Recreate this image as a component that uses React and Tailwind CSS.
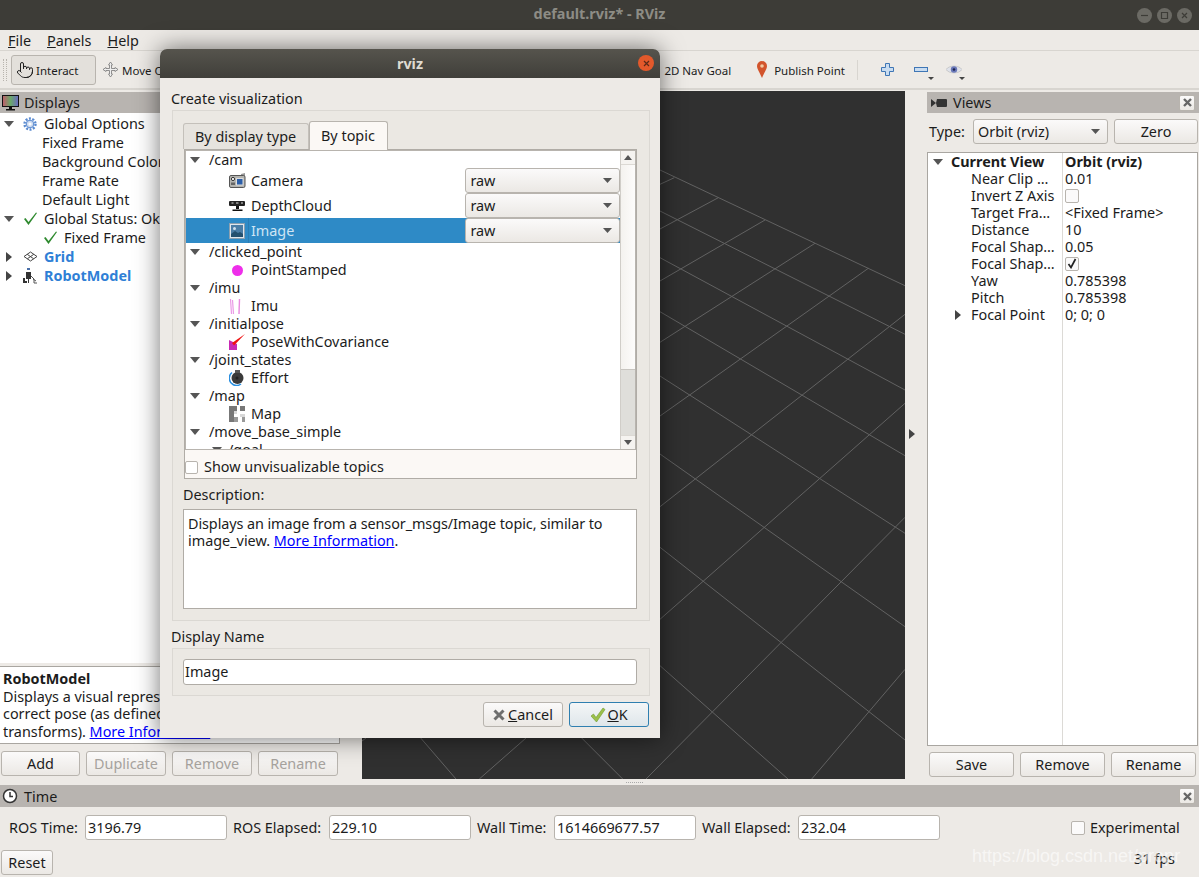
import { Pointer } from "lucide-react";

const GRID_LINES = [
  [660, 170, 905, 285.7], [660, 211, 905, 334.3], [660, 257.7, 905, 390], [660, 311.7, 905, 455.7],
  [660, 376, 905, 533.3], [660, 454, 905, 626.7], [660, 547.3, 905, 740], [660, 665.7, 788, 779],
  [420.7, 738, 456, 779], [581.7, 738, 622.7, 779],
  [660, 184.3, 674.3, 177.7], [660, 229, 718.3, 197.7], [660, 281, 765, 220], [660, 342.3, 815, 243.3],
  [660, 416, 868.3, 268.3], [660, 506.7, 905, 314.3], [660, 619.3, 905, 403.3], [646, 779, 905, 517.3],
  [811.7, 779, 905, 669.3], [479.3, 779, 526, 738], [362, 741, 366, 738],
];

const btnClass =
  "flex items-center justify-center rounded-[3px] border border-[#b8b4ae] bg-linear-to-b from-[#fbfafa] to-[#ebe8e4]";

function CaretDown({ className = "" }) {
  return (
    <svg width="10" height="6" viewBox="0 0 10 6" className={`shrink-0 ${className}`}>
      <path d="M0 0h10L5 6z" fill="#555" />
    </svg>
  );
}

function CaretRight({ className = "" }) {
  return (
    <svg width="6" height="10" viewBox="0 0 6 10" className={`shrink-0 ${className}`}>
      <path d="M0 0v10l6-5z" fill="#444" />
    </svg>
  );
}

function Check({ size = 15 }) {
  return (
    <svg width={size} height={size} viewBox="0 0 15 15" className="shrink-0">
      <path d="M1 8l1.500-1 3 4L13 1.500l1 .5L5.500 14z" fill="#2f8a2f" />
    </svg>
  );
}

function CloseBox() {
  return (
    <div className={`${btnClass} h-[16px] w-[16px] !rounded-[2px]`}>
      <svg width="9" height="9" viewBox="0 0 9 9">
        <path d="M1 1l7 7M8 1L1 8" stroke="#666" strokeWidth="2.400" />
      </svg>
    </div>
  );
}

function Btn({ children, className = "", disabled }) {
  return <div className={`${btnClass} ${disabled ? "text-[#a6a29d]" : ""} ${className}`}>{children}</div>;
}

function Combo({ label, className = "" }) {
  return (
    <div className={`${btnClass} !justify-between pl-[4px] pr-[7px] ${className}`}>
      <span>{label}</span>
      <svg width="9" height="5" viewBox="0 0 9 5">
        <path d="M0 0h9L4.500 5z" fill="#555" />
      </svg>
    </div>
  );
}

function DisplaysIcon() {
  return (
    <svg width="17" height="16" viewBox="0 0 17 16" className="shrink-0">
      <defs>
        <linearGradient id="scr" x1="0" x2="1" y1="0" y2="0">
          <stop offset="0" stopColor="#c25a6a" />
          <stop offset="0.5" stopColor="#6aa86a" />
          <stop offset="1" stopColor="#6a6ac2" />
        </linearGradient>
      </defs>
      <rect x="0.500" y="0.500" width="16" height="11" fill="url(#scr)" stroke="#111" />
      <path d="M7 12h3v2H7zM4 14h9v1.500H4z" fill="#111" />
    </svg>
  );
}

function GearIcon() {
  return (
    <svg width="14" height="14" viewBox="0 0 14 14" className="shrink-0">
      <circle cx="7" cy="7" r="5.500" fill="none" stroke="#5b8bd0" strokeWidth="2.400" strokeDasharray="2 1.450" />
      <circle cx="7" cy="7" r="3.800" fill="#cfdcf0" stroke="#5b8bd0" />
      <circle cx="7" cy="7" r="1.600" fill="#fff" />
    </svg>
  );
}

function GridIcon() {
  return (
    <svg width="15" height="11" viewBox="0 0 15 11" className="shrink-0">
      <path d="M7.500 1L14 5.500 7.500 10 1 5.500zM4.200 3.300l6.500 4.500M10.800 3.300L4.300 7.800" fill="none" stroke="#444" />
    </svg>
  );
}

function RobotIcon() {
  return (
    <svg width="16" height="16" viewBox="0 0 16 16" className="shrink-0">
      <path d="M5 0h3v2H5z" fill="#4a6fa8" />
      <path d="M4 4h5v7H4zM1 10h2v5H1zM3 13h2v2H3zM6 11h1v4H6z" fill="#333" />
      <path d="M9 8l3 3v4M12 15h3M11 11l3 2" fill="none" stroke="#555" />
    </svg>
  );
}

function CameraIcon() {
  return (
    <svg width="17" height="16" viewBox="0 0 17 16" className="shrink-0">
      <path d="M12 1l4-1v3h-4z" fill="#999" />
      <rect x="0.500" y="2.500" width="15.500" height="12" rx="1.500" fill="#b4b4b0" stroke="#555" />
      <circle cx="4" cy="6" r="1.600" fill="#fff" stroke="#333" />
      <rect x="2" y="9.500" width="4" height="2.500" fill="#666" />
      <rect x="7.500" y="5.500" width="6.500" height="6.500" fill="#2b5ea8" stroke="#ddd" />
    </svg>
  );
}

function DepthIcon() {
  return (
    <svg width="17" height="12" viewBox="0 0 17 12" className="shrink-0">
      <rect x="0" y="1" width="16" height="5" rx="1" fill="#222" />
      <path d="M2.500 3h2M7 3h2.500M12 3h2" stroke="#ddd" />
      <path d="M7 6h3v3H7zM3.500 9.500h10v1.500h-10z" fill="#111" />
    </svg>
  );
}

function ImageIcon() {
  return (
    <svg width="16" height="16" viewBox="0 0 16 16" className="shrink-0">
      <rect x="0.500" y="0.500" width="15" height="15" fill="#dfe6ec" stroke="#8ca0b0" />
      <rect x="2" y="2" width="12" height="12" fill="#4a7da6" />
      <circle cx="5.500" cy="5.500" r="1.500" fill="#cfe0ee" />
      <path d="M2 14v-3l4-3 3 2 2-1 3 2v3z" fill="#23506f" />
    </svg>
  );
}

function PoseIcon() {
  return (
    <svg width="17" height="16" viewBox="0 0 17 16" className="shrink-0">
      <path d="M0 6l8 4v6H0z" fill="#c828b4" />
      <path d="M16 0L3 9l2 2.500z" fill="#ee1111" />
    </svg>
  );
}

function ImuIcon() {
  return (
    <svg width="12" height="15" viewBox="0 0 12 15" className="shrink-0">
      <path d="M1.500 0l1 15M3.500 1l1 14" stroke="#ea9ae6" strokeWidth="1.200" />
      <path d="M10.500 0L10 15" stroke="#e88ae0" strokeWidth="1.400" />
    </svg>
  );
}

function EffortIcon() {
  return (
    <svg width="16" height="16" viewBox="0 0 16 16" className="shrink-0">
      <circle cx="8.500" cy="8" r="6" fill="#3a3a3a" />
      <path d="M6 0h5v3H6z" fill="#555" />
      <path d="M3 2.500A7.300 7.300 0 0 0 4 14.500a7.300 7.300 0 0 0 8-.5" fill="none" stroke="#2a8fe0" strokeWidth="1.500" />
      <circle cx="8" cy="8" r="1.500" fill="#222" />
    </svg>
  );
}

function MapIcon() {
  return (
    <svg width="16" height="16" viewBox="0 0 16 16" className="shrink-0">
      <path d="M0 0h8v5H5v11H0zM11 0h5v5h-5z" fill="#777" />
      <path d="M5 5h3v3H5zM11 8h5v3h-5z" fill="#d8d8d8" />
      <path d="M5 11h4v5H5zM13 11h3v5h-3z" fill="#999" />
    </svg>
  );
}

function LeftRow({ indent, children }) {
  return <div className={`flex h-[19px] items-center whitespace-nowrap ${indent}`}>{children}</div>;
}

function DisplaysPanel() {
  return (
    <div className="flex w-[340px] flex-col pt-[2px]">
      <div className="flex h-[21px] items-center gap-[5px] bg-[#b8b4b0] pl-[2px]">
        <DisplaysIcon />
        <span>Displays</span>
      </div>
      <div className="h-[550px] overflow-hidden bg-white pt-px">
        <LeftRow indent="pl-[4px]">
          <CaretDown />
          <span className="ml-[9px]"><GearIcon /></span>
          <span className="ml-[7px]">Global Options</span>
        </LeftRow>
        <LeftRow indent="pl-[42px]">Fixed Frame</LeftRow>
        <LeftRow indent="pl-[42px]">Background Color</LeftRow>
        <LeftRow indent="pl-[42px]">Frame Rate</LeftRow>
        <LeftRow indent="pl-[42px]">Default Light</LeftRow>
        <LeftRow indent="pl-[4px]">
          <CaretDown />
          <span className="ml-[9px]"><Check /></span>
          <span className="ml-[6px]">Global Status: Ok</span>
        </LeftRow>
        <LeftRow indent="pl-[43px]">
          <Check />
          <span className="ml-[6px]">Fixed Frame</span>
        </LeftRow>
        <LeftRow indent="pl-[6px]">
          <CaretRight />
          <span className="ml-[11px]"><GridIcon /></span>
          <span className="ml-[6px] font-bold text-[#2f7fd6]">Grid</span>
        </LeftRow>
        <LeftRow indent="pl-[6px]">
          <CaretRight />
          <span className="ml-[10px]"><RobotIcon /></span>
          <span className="ml-[6px] font-bold text-[#2f7fd6]">RobotModel</span>
        </LeftRow>
      </div>
      <div className="mt-[3px] h-[78px] overflow-hidden border border-[#a9a6a1] border-l-0 bg-white pl-[3px] pt-[3px] leading-[17.500px] whitespace-nowrap">
        <div className="font-bold">RobotModel</div>
        <div>Displays a visual representation of a robot in the</div>
        <div>correct pose (as defined by the current TF</div>
        <div>
          transforms). <span className="text-[#0000ff] underline">More Information</span>.
        </div>
      </div>
      <div className="mt-[7px] flex gap-[6px] pl-px">
        <Btn className="h-[25px] w-[79px]">Add</Btn>
        <Btn className="h-[25px] w-[80px]" disabled>Duplicate</Btn>
        <Btn className="h-[25px] w-[80px]" disabled>Remove</Btn>
        <Btn className="h-[25px] w-[80px]" disabled>Rename</Btn>
      </div>
    </div>
  );
}

function ViewsPanel() {
  const rows = [
    ["Near Clip …", "0.01"],
    ["Invert Z Axis", "box"],
    ["Target Fra…", "<Fixed Frame>"],
    ["Distance", "10"],
    ["Focal Shap…", "0.05"],
    ["Focal Shap…", "checked"],
    ["Yaw", "0.785398"],
    ["Pitch", "0.785398"],
  ];
  return (
    <div className="flex w-[272px] flex-col pt-[2px]">
      <div className="flex h-[21px] items-center justify-between bg-[#b8b4b0] pl-[4px] pr-[4px]">
        <div className="flex items-center gap-[6px]">
          <svg width="16" height="10" viewBox="0 0 16 10">
            <path d="M0 1l5 4-5 4zM6 1h9a1 1 0 0 1 1 1v6a1 1 0 0 1-1 1H6l-1-4z" fill="#333" />
          </svg>
          <span>Views</span>
        </div>
        <CloseBox />
      </div>
      <div className="mt-[6px] flex h-[25px] items-center pl-[2px] pr-px">
        <span className="w-[44px]">Type:</span>
        <Combo label="Orbit (rviz)" className="h-[25px] w-[135px]" />
        <Btn className="ml-[6px] h-[25px] w-[84px]">Zero</Btn>
      </div>
      <div className="mr-px mt-[8px] flex h-[594px] border border-[#a9a6a1] bg-white">
        <div className="w-[135px] border-r border-[#dcdad6]">
          <div className="flex h-[17px] items-center pl-[5px] font-bold">
            <CaretDown />
            <span className="ml-[8px]">Current View</span>
          </div>
          {rows.map(([name], i) => (
            <div key={i} className="flex h-[17px] items-center whitespace-nowrap pl-[43px]">{name}</div>
          ))}
          <div className="flex h-[17px] items-center pl-[27px]">
            <CaretRight />
            <span className="ml-[10px]">Focal Point</span>
          </div>
        </div>
        <div className="flex-1 pl-[2px]">
          <div className="flex h-[17px] items-center font-bold">Orbit (rviz)</div>
          {rows.map(([, value], i) => (
            <div key={i} className="flex h-[17px] items-center">
              {value === "box" || value === "checked" ? (
                <div className="flex h-[14px] w-[14px] items-center justify-center rounded-[2px] border border-[#b8b4ae] bg-[#fbfafa]">
                  {value === "checked" && (
                    <svg width="10" height="11" viewBox="0 0 10 11">
                      <path d="M1.500 6l2.500 3.500L8.500 1" fill="none" stroke="#222" strokeWidth="1.700" />
                    </svg>
                  )}
                </div>
              ) : (
                value
              )}
            </div>
          ))}
          <div className="flex h-[17px] items-center">0; 0; 0</div>
        </div>
      </div>
      <div className="mt-[6px] flex gap-[6px] pl-[2px]">
        <Btn className="h-[25px] w-[85px]">Save</Btn>
        <Btn className="h-[25px] w-[85px]">Remove</Btn>
        <Btn className="h-[25px] w-[85px]">Rename</Btn>
      </div>
    </div>
  );
}

function TopicGroup({ name, className = "h-[18px]" }) {
  return (
    <div className={`flex items-center pl-[4px] ${className}`}>
      <CaretDown />
      <span className="ml-[9px]">{name}</span>
    </div>
  );
}

function TopicItem({ icon, name }) {
  return (
    <div className="flex h-[18px] items-center pl-[43px]">
      <div className="flex w-[22px] items-center justify-start">{icon}</div>
      <span>{name}</span>
    </div>
  );
}

function ComboRow({ icon, name, selected }) {
  return (
    <div className={`flex h-[25px] items-center pl-[43px] ${selected ? "bg-[#2e8ac6] text-[#cfe5f4]" : ""}`}>
      <div className={`flex h-full w-[20px] items-center ${selected ? "border-r border-[#2a7db4]" : ""}`}>{icon}</div>
      <span className="ml-[2px] w-[215px]">{name}</span>
      <Combo label="raw" className="h-[25px] w-[155px] text-[#1c1c1c]" />
    </div>
  );
}

function CreateDialog() {
  return (
    <div className="absolute left-[160px] top-[49px] h-[689px] w-[500px] rounded-t-[7px] bg-[#edeae6] shadow-[0_0_24px_rgba(0,0,0,0.55)]">
      <div className="relative flex h-[29px] items-center justify-center rounded-t-[7px] bg-linear-to-b from-[#56544d] to-[#403f3a] font-bold text-[#dfdbd2]">
        rviz
        <div className="absolute right-[6px] top-[6px] flex h-[16px] w-[16px] items-center justify-center rounded-full bg-[#e3592b]">
          <svg width="7" height="7" viewBox="0 0 7 7">
            <path d="M1 1l5 5M6 1L1 6" stroke="#5a2a18" strokeWidth="1.200" />
          </svg>
        </div>
      </div>
      <div className="flex h-[32px] items-center pl-[11px] pt-[10px]">Create visualization</div>

      <div className="ml-[12px] h-[511px] w-[478px] border border-[#dbd8d3] bg-[#ebe8e3] pl-[10px] pt-[10px]">
        <div className="flex h-[28px] items-end">
          <div className="flex h-[26px] w-[126px] items-center rounded-t-[3px] border border-b-0 border-[#c4c0ba] bg-[#e6e3de] pl-[11px]">By display type</div>
          <div className="z-10 -mb-px flex h-[29px] w-[79px] items-center rounded-t-[3px] border border-b-0 border-[#b8b4ae] bg-[#fbf8f5] pl-[11px]">By topic</div>
        </div>
        <div className="ml-px h-[330px] w-[453px] border border-[#b0aca6] bg-[#fbf8f5]">
          <div className="flex h-[300px] border border-[#b8b4ae] bg-white">
            <div className="flex-1 overflow-hidden leading-[18px]">
              <TopicGroup name="/cam" className="h-[17px]" />
              <ComboRow icon={<CameraIcon />} name="Camera" />
              <ComboRow icon={<DepthIcon />} name="DepthCloud" />
              <ComboRow icon={<ImageIcon />} name="Image" selected />
              <TopicGroup name="/clicked_point" />
              <TopicItem
                icon={<span className="ml-[3px] h-[11px] w-[11px] rounded-full bg-[#ee2eea]" />}
                name="PointStamped"
              />
              <TopicGroup name="/imu" />
              <TopicItem icon={<ImuIcon />} name="Imu" />
              <TopicGroup name="/initialpose" />
              <TopicItem icon={<PoseIcon />} name="PoseWithCovariance" />
              <TopicGroup name="/joint_states" />
              <TopicItem icon={<EffortIcon />} name="Effort" />
              <TopicGroup name="/map" />
              <TopicItem icon={<MapIcon />} name="Map" />
              <TopicGroup name="/move_base_simple" />
              <div className="flex h-[18px] items-center pl-[26px]">
                <CaretDown />
                <span className="ml-[6px]">/goal</span>
              </div>
            </div>
            <div className="flex w-[15px] flex-col border-l border-[#d0cdc8]">
              <div className="flex h-[14px] items-center justify-center border-b border-[#dcd9d4] bg-[#f5f3f0]">
                <svg width="8" height="5" viewBox="0 0 8 5"><path d="M0 5h8L4 0z" fill="#555" /></svg>
              </div>
              <div className="h-[204px] bg-linear-to-r from-[#f4f2ef] to-[#fdfcfb]" />
              <div className="flex-1 border-t border-[#c8c5c0] bg-[#dfdeda]" />
              <div className="flex h-[14px] items-center justify-center border-t border-[#dcd9d4] bg-[#f5f3f0]">
                <svg width="8" height="5" viewBox="0 0 8 5"><path d="M0 0h8L4 5z" fill="#555" /></svg>
              </div>
            </div>
          </div>
          <div className="flex h-[28px] items-center pt-[6px]">
            <div className="h-[13px] w-[13px] rounded-[2px] border border-[#b8b4ae] bg-white" />
            <span className="ml-[6px]">Show unvisualizable topics</span>
          </div>
        </div>
        <div className="flex h-[30px] items-center pt-[2px]">Description:</div>
        <div className="h-[100px] w-[454px] border border-[#b0aca6] bg-white px-[4px] pt-[5px] leading-[17px]">
          <span className="tracking-[-0.080px]">Displays an image from a sensor_msgs/Image topic, similar to</span>
          <br />
          image_view. <span className="text-[#0000ff] underline">More Information</span>.
        </div>
      </div>

      <div className="flex h-[27px] items-center pl-[11px] pt-[4px]">Display Name</div>
      <div className="ml-[12px] h-[48px] w-[478px] border border-[#dbd8d3] bg-[#ebe8e3] pl-[10px] pt-[10px]">
        <div className="flex h-[26px] w-[454px] items-center rounded-[3px] border border-[#b0aca6] bg-white pl-[1px]">Image</div>
      </div>
      <div className="mt-[6px] flex justify-end gap-[6px] pr-[11px]">
        <Btn className="h-[25px] w-[80px] gap-[3px]">
          <svg width="12" height="12" viewBox="0 0 12 12">
            <path d="M1.500 1.500l9 9M10.500 1.500l-9 9" stroke="#6e6e6e" strokeWidth="3" />
          </svg>
          <span><span className="underline">C</span>ancel</span>
        </Btn>
        <Btn className="h-[25px] w-[80px] gap-[1px] !border-[#2f7fb0] !from-[#f4f6f7] !to-[#dfe6ea]">
          <svg width="16" height="16" viewBox="0 0 16 16">
            <path d="M1 9l2.500-2 2.500 3.500L13 1l2 1.500L6.500 15z" fill="#9cc04a" stroke="#6f9a2e" strokeWidth="0.600" />
          </svg>
          <span><span className="underline">O</span>K</span>
        </Btn>
      </div>
    </div>
  );
}

function TimeField({ label, value, labelClass }) {
  return (
    <>
      <span className={`whitespace-nowrap ${labelClass}`}>{label}</span>
      <div className="flex h-[25px] w-[142px] items-center rounded-[3px] border border-[#b8b4ae] bg-white pl-[2px]">{value}</div>
    </>
  );
}

export default function App() {
  return (
    <div className="relative flex h-[877px] w-[1199px] flex-col overflow-hidden bg-[#edeae6] font-['Noto_Sans',sans-serif] text-[14.400px] leading-[18px] text-[#1c1c1c]">
      <div className="relative flex h-[30px] items-center justify-center bg-[#3d3c37] pb-[2px] font-bold text-[#8d8c85]">
        default.rviz* - RViz
        <div className="absolute right-[7px] top-[8px] flex gap-[5px]">
          {["M4 7.500h7", "M4.500 4.500h6v6h-6z", "M5 5l5 5M10 5l-5 5"].map((d) => (
            <div key={d} className="h-[15px] w-[15px] rounded-full bg-[#6b6a64]">
              <svg width="15" height="15" viewBox="0 0 15 15">
                <path d={d} fill="none" stroke="#3d3c37" strokeWidth="1.200" />
              </svg>
            </div>
          ))}
        </div>
      </div>

      <div className="flex h-[21px] items-center gap-[16px] border-b border-[#d8d5d0] pl-[8px] pt-[2px]">
        <span><span className="underline">F</span>ile</span>
        <span><span className="underline">P</span>anels</span>
        <span><span className="underline">H</span>elp</span>
      </div>

      <div className="flex h-[39px] items-center border-b-2 border-[#d8d5d0] text-[11.500px]">
        <div className="ml-[3px] h-[22px] w-[4px] border-x border-dotted border-[#b8b4ae]" />
        <div className="ml-[4px] flex h-[30px] w-[85px] items-center gap-[2px] rounded-[3px] border border-[#b8b4ae] bg-[#e3e0db] pl-[4px]">
          <Pointer size={18} strokeWidth={1.300} />
          <span className="pt-[3px]">Interact</span>
        </div>
        <div className="ml-[6px] flex items-center gap-[3px] whitespace-nowrap">
          <svg width="17" height="17" viewBox="0 0 17 17">
            <path d="M8.500 1l2 3H9.500v3.500H13V6.500l3 2-3 2V9.500H9.500V13h1l-2 3-2-3h1V9.500H4v1l-3-2 3-2v1h3.500V4h-1z" fill="#eee" stroke="#777" strokeWidth="0.800" />
          </svg>
          <span className="pt-[3px]">Move Camera</span>
        </div>
        <span className="ml-[468px] whitespace-nowrap pt-[3px]">2D Nav Goal</span>
        <svg width="10" height="17" viewBox="0 0 10 17" className="ml-[26px]">
          <path d="M5 0a5 5 0 0 1 5 5c0 3-3 7-5 12C3 12 0 8 0 5a5 5 0 0 1 5-5z" fill="#d2542c" />
          <circle cx="5" cy="5" r="1.800" fill="#f3c9a0" />
        </svg>
        <span className="ml-[7px] whitespace-nowrap pt-[3px]">Publish Point</span>
        <div className="ml-[12px] h-[20px] w-px bg-[#d8d5d0]" />
        <svg width="13" height="13" viewBox="0 0 13 13" className="ml-[23px]">
          <path d="M4.500.500h4v4h4v4h-4v4h-4v-4h-4v-4h4z" fill="#c9dcf0" stroke="#3f76b5" />
        </svg>
        <div className="relative ml-[20px]">
          <svg width="14" height="6" viewBox="0 0 14 6">
            <rect x="0.500" y="0.500" width="13" height="4" fill="#c9dcf0" stroke="#3f76b5" />
          </svg>
          <svg width="6" height="3" viewBox="0 0 6 3" className="absolute -right-[6px] top-[10px]"><path d="M0 0h6L3 3z" fill="#444" /></svg>
        </div>
        <div className="relative ml-[18px]">
          <svg width="16" height="11" viewBox="0 0 16 11">
            <path d="M0 5.500C3 1 13 1 16 5.500 13 10 3 10 0 5.500z" fill="#dfe2ea" stroke="#aaa" strokeWidth="0.500" />
            <circle cx="8" cy="5.500" r="3.200" fill="#6a78b8" />
            <circle cx="8" cy="5.500" r="1.300" fill="#1c2250" />
          </svg>
          <svg width="6" height="3" viewBox="0 0 6 3" className="absolute -right-[3px] top-[13px]"><path d="M0 0h6L3 3z" fill="#444" /></svg>
        </div>
      </div>

      <div className="flex h-[695px]">
        <DisplaysPanel />
        <div className="w-[22px]" />
        <div className="flex w-[543px] flex-col pt-px">
          <svg width="543" height="688" viewBox="362 91 543 688" className="block bg-[#303030]">
            {GRID_LINES.map(([x1, y1, x2, y2], i) => (
              <line key={i} x1={x1} y1={y1} x2={x2} y2={y2} stroke="#626262" strokeWidth="1" />
            ))}
          </svg>
          <div className="flex h-[6px] items-center justify-center">
            <div className="ml-[2px] h-px w-[17px] border-t border-dotted border-[#aaa]" />
          </div>
        </div>
        <div className="flex w-[22px] items-center pl-[4px]">
          <CaretRight className="-translate-y-[4px]" />
        </div>
        <ViewsPanel />
      </div>

      <div className="flex h-[22px] items-center justify-between bg-[#b8b4b0] pl-[2px] pr-[4px]">
        <div className="flex items-center gap-[6px]">
          <svg width="16" height="16" viewBox="0 0 16 16">
            <circle cx="8" cy="8" r="6.500" fill="#fff" stroke="#333" strokeWidth="1.500" />
            <path d="M8 4v4.500h3" fill="none" stroke="#333" strokeWidth="1.500" />
          </svg>
          <span className="pt-px">Time</span>
        </div>
        <CloseBox />
      </div>
      <div className="mt-[7px] flex h-[27px] items-center pl-[9px]">
        <TimeField label="ROS Time:" value="3196.79" labelClass="w-[76px]" />
        <span className="w-[6px]" />
        <TimeField label="ROS Elapsed:" value="229.10" labelClass="w-[96px]" />
        <span className="w-[6px]" />
        <TimeField label="Wall Time:" value="1614669677.57" labelClass="w-[77px]" />
        <span className="w-[6px]" />
        <TimeField label="Wall Elapsed:" value="232.04" labelClass="w-[96px]" />
        <div className="ml-[131px] h-[14px] w-[14px] rounded-[2px] border border-[#b8b4ae] bg-[#fbfafa]" />
        <span className="ml-[5px]">Experimental</span>
      </div>
      <div className="mt-[9px] flex items-start justify-between pl-px pr-[24px]">
        <Btn className="h-[25px] w-[52px]">Reset</Btn>
        <span>31 fps</span>
      </div>
      <div className="absolute left-[972px] top-[847px] whitespace-nowrap font-['Liberation_Sans',sans-serif] text-[18px] text-white/60">
        https://blog.csdn.net/propr
      </div>

      <CreateDialog />
    </div>
  );
}
